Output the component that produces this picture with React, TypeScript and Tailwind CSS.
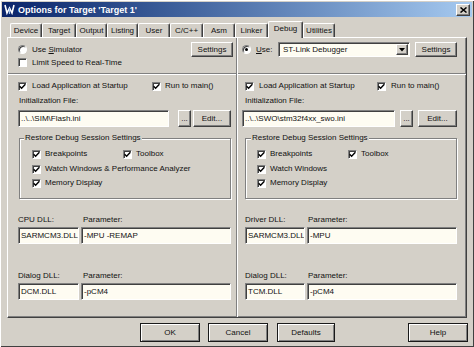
import React from "react";

// Windows-classic dialog: "Options for Target" / Debug tab

function Check({ checked = true }: { checked?: boolean }) {
  return (
    <span className="w-[9px] h-[9px] shrink-0 bg-white border border-t-[#808080] border-l-[#808080] border-r-white border-b-white shadow-[inset_1px_1px_0_#404040] flex items-center justify-center">
      {checked && (
        <svg width="7" height="7" viewBox="0 0 7 7" className="overflow-visible">
          <path d="M0.6 3.2 L2.6 5.2 L6.4 1.2" fill="none" stroke="#000" strokeWidth="1.4" />
        </svg>
      )}
    </span>
  );
}

function Radio({ on = false }: { on?: boolean }) {
  return (
    <span className="w-[9px] h-[9px] shrink-0 rounded-full bg-white border border-t-[#808080] border-l-[#808080] border-r-white border-b-white shadow-[inset_1px_1px_0_#404040] flex items-center justify-center">
      {on && <span className="w-[3px] h-[3px] rounded-full bg-black" />}
    </span>
  );
}

function Btn({ children, className = "" }: { children: React.ReactNode; className?: string }) {
  return (
    <div className={`shrink-0 flex items-center justify-center bg-[#d4d0c8] border border-t-white border-l-white border-r-[#404040] border-b-[#404040] shadow-[inset_-1px_-1px_0_#808080] ${className}`}>
      {children}
    </div>
  );
}

function DlgBtn({ children, className = "" }: { children: React.ReactNode; className?: string }) {
  return (
    <div className={`h-[19px] shrink-0 flex items-center justify-center bg-[#d4d0c8] border border-[#1a1a1a] shadow-[inset_1px_1px_0_#fff,inset_-1px_-1px_0_#808080] ${className}`}>
      {children}
    </div>
  );
}

function Field({ value, className = "" }: { value: string; className?: string }) {
  return (
    <div className={`h-[17px] shrink-0 flex items-center pl-[2px] bg-[#fefcf2] border border-t-[#808080] border-l-[#808080] border-r-white border-b-white shadow-[inset_1px_1px_0_#404040] whitespace-nowrap overflow-hidden ${className}`}>
      {value}
    </div>
  );
}

function Groove() {
  return <div className="h-[2px] border-t border-t-[#808080] border-b border-b-white" />;
}

function TitleIcon() {
  return (
    <svg width="11" height="11" viewBox="0 0 11 11">
      <path d="M1 1 L3 9 L5.5 4 L8 9 L10 1" fill="none" stroke="#fff" strokeWidth="1.6" />
      <path d="M5.5 4 L5.5 10" stroke="#9fc3f0" strokeWidth="1.2" />
    </svg>
  );
}

const tabs = [
  { label: "Device", cls: "w-[32px]" },
  { label: "Target", cls: "w-[34px]" },
  { label: "Output", cls: "w-[31px]" },
  { label: "Listing", cls: "w-[31px]" },
  { label: "User", cls: "w-[32px]" },
  { label: "C/C++", cls: "w-[33px]" },
  { label: "Asm", cls: "w-[32px]" },
  { label: "Linker", cls: "w-[33px]" },
  { label: "Debug", cls: "w-[35px]", active: true },
  { label: "Utilities", cls: "w-[32px]" },
];

function LeftPane() {
  return (
    <div className="w-[228px] flex flex-col">
      <div className="mt-[4px] h-[15px] flex items-center pl-[10px] pr-[3px]">
        <Radio />
        <span className="ml-[5px]">
          Use <span className="underline">S</span>imulator
        </span>
        <Btn className="ml-auto w-[42px] h-[15px]">Settings</Btn>
      </div>
      <div className="h-[11px] flex items-center gap-[5px] pl-[10px]">
        <Check checked={false} />
        <span>Limit Speed to Real-Time</span>
      </div>
      <div className="mt-[5px]">
        <Groove />
      </div>

      <div className="mt-[6px] h-[10px] flex items-center pl-[10px]">
        <div className="w-[134px] flex items-center gap-[5px]">
          <Check />
          <span>Load Application at Startup</span>
        </div>
        <div className="flex items-center gap-[4px]">
          <Check />
          <span>Run to main()</span>
        </div>
      </div>
      <div className="mt-[5px] h-[10px] pl-[11px]">Initialization File:</div>
      <div className="mt-[4px] flex pl-[10px]">
        <Field value={"..\\..\\SIM\\Flash.ini"} className="w-[151px]" />
        <Btn className="ml-[9px] w-[13px] h-[17px]">...</Btn>
        <Btn className="ml-[2px] w-[38px] h-[17px]">Edit...</Btn>
      </div>

      <div className="relative mt-[11px] ml-[11px] w-[212px] h-[61px] border border-[#808080] shadow-[inset_1px_1px_0_#fff,1px_1px_0_#fff] pt-[10px] pl-[12px] flex flex-col">
        <span className="absolute -top-[6px] left-[4px] px-[1px] bg-[#d4d0c8] leading-[10px]">Restore Debug Session Settings</span>
        <div className="h-[10px] flex items-center">
          <div className="w-[91px] flex items-center gap-[4px]">
            <Check />
            <span>Breakpoints</span>
          </div>
          <div className="flex items-center gap-[4px]">
            <Check />
            <span>Toolbox</span>
          </div>
        </div>
        <div className="mt-[5px] h-[10px] flex items-center gap-[4px]">
          <Check />
          <span>Watch Windows &amp; Performance Analyzer</span>
        </div>
        <div className="mt-[4px] h-[10px] flex items-center gap-[4px]">
          <Check />
          <span>Memory Display</span>
        </div>
      </div>

      <div className="mt-[16px] h-[10px] flex pl-[10px]">
        <span className="w-[63px]">CPU DLL:</span>
        <span className="pl-[2px]">Parameter:</span>
      </div>
      <div className="mt-[2px] flex pl-[10px]">
        <Field value="SARMCM3.DLL" className="w-[61px]" />
        <Field value="-MPU -REMAP" className="ml-[2px] w-[150px]" />
      </div>
      <div className="mt-[27px] h-[10px] flex pl-[10px]">
        <span className="w-[63px]">Dialog DLL:</span>
        <span className="pl-[2px]">Parameter:</span>
      </div>
      <div className="mt-[2px] flex pl-[10px]">
        <Field value="DCM.DLL" className="w-[61px]" />
        <Field value="-pCM4" className="ml-[2px] w-[150px]" />
      </div>
    </div>
  );
}

function RightPane() {
  return (
    <div className="w-[228px] flex flex-col">
      <div className="mt-[4px] h-[15px] flex items-center pl-[4px]">
        <div className="w-[36px] flex items-center">
          <Radio on />
          <span className="ml-[5px]">
            <span className="underline">U</span>se:
          </span>
        </div>
        <div className="w-[132px] h-[15px] flex items-center bg-[#fefcf2] border border-t-[#808080] border-l-[#808080] border-r-white border-b-white shadow-[inset_1px_1px_0_#404040] pl-[4px]">
          <span>ST-Link Debugger</span>
          <Btn className="ml-auto mr-[1px] w-[12px] h-[11px]">
            <svg width="6" height="4" viewBox="0 0 6 4">
              <path d="M0 0 H6 L3 3.5 Z" fill="#000" />
            </svg>
          </Btn>
        </div>
        <Btn className="ml-[5px] w-[42px] h-[15px]">Settings</Btn>
      </div>
      <div className="mt-[16px]">
        <Groove />
      </div>

      <div className="mt-[6px] h-[10px] flex items-center pl-[7px]">
        <div className="w-[132px] flex items-center gap-[5px]">
          <Check />
          <span>Load Application at Startup</span>
        </div>
        <div className="flex items-center gap-[5px]">
          <Check />
          <span>Run to main()</span>
        </div>
      </div>
      <div className="mt-[5px] h-[10px] pl-[7px]">Initialization File:</div>
      <div className="mt-[4px] flex pl-[4px]">
        <Field value={"..\\..\\SWO\\stm32f4xx_swo.ini"} className="w-[153px]" />
        <Btn className="ml-[5px] w-[13px] h-[17px]">...</Btn>
        <Btn className="ml-[5px] w-[39px] h-[17px]">Edit...</Btn>
      </div>

      <div className="relative mt-[11px] ml-[7px] w-[212px] h-[61px] border border-[#808080] shadow-[inset_1px_1px_0_#fff,1px_1px_0_#fff] pt-[10px] pl-[11px] flex flex-col">
        <span className="absolute -top-[6px] left-[5px] px-[1px] bg-[#d4d0c8] leading-[10px]">Restore Debug Session Settings</span>
        <div className="h-[10px] flex items-center">
          <div className="w-[91px] flex items-center gap-[4px]">
            <Check />
            <span>Breakpoints</span>
          </div>
          <div className="flex items-center gap-[4px]">
            <Check />
            <span>Toolbox</span>
          </div>
        </div>
        <div className="mt-[5px] h-[10px] flex items-center gap-[4px]">
          <Check />
          <span>Watch Windows</span>
        </div>
        <div className="mt-[4px] h-[10px] flex items-center gap-[4px]">
          <Check />
          <span>Memory Display</span>
        </div>
      </div>

      <div className="mt-[16px] h-[10px] flex pl-[7px]">
        <span className="w-[62px]">Driver DLL:</span>
        <span className="pl-[1px]">Parameter:</span>
      </div>
      <div className="mt-[2px] flex pl-[7px]">
        <Field value="SARMCM3.DLL" className="w-[60px]" />
        <Field value="-MPU" className="ml-[2px] w-[150px]" />
      </div>
      <div className="mt-[27px] h-[10px] flex pl-[7px]">
        <span className="w-[62px]">Dialog DLL:</span>
        <span className="pl-[1px]">Parameter:</span>
      </div>
      <div className="mt-[2px] flex pl-[7px]">
        <Field value="TCM.DLL" className="w-[60px]" />
        <Field value="-pCM4" className="ml-[2px] w-[150px]" />
      </div>
    </div>
  );
}

export default function App() {
  return (
    <div className="w-[474px] h-[347px] bg-[#d4d0c8] flex flex-col text-[8px] leading-[10px] text-[#111] font-['Liberation_Sans',Arial,sans-serif] overflow-hidden shadow-[inset_1px_1px_0_#fff,inset_-1px_-1px_0_#404040]">
      {/* title bar */}
      <div className="mt-[2px] mx-[2px] h-[15px] flex items-center bg-linear-to-r from-[#0a246a] to-[#a6caf0] pl-[2px] pr-[2px]">
        <TitleIcon />
        <span className="ml-[3px] text-[9px] font-bold text-white">Options for Target 'Target 1'</span>
        <Btn className="ml-auto w-[14px] h-[12px]">
          <svg width="7" height="6" viewBox="0 0 7 6">
            <path d="M0.5 0.5 L6.5 5.5 M6.5 0.5 L0.5 5.5" stroke="#000" strokeWidth="1.5" />
          </svg>
        </Btn>
      </div>

      {/* tabs */}
      <div className="h-[20px] flex items-end pl-[10px]">
        {tabs.map((t) =>
          t.active ? (
            <div
              key={t.label}
              className={`${t.cls} h-[17px] -mb-[1px] relative z-10 pb-[3px] flex items-center justify-center bg-[#d4d0c8] border-t border-l border-r border-t-white border-l-white border-r-[#404040] rounded-t-[2px] shadow-[inset_-1px_0_0_#808080]`}
            >
              {t.label}
            </div>
          ) : (
            <div
              key={t.label}
              className={`${t.cls} h-[14px] flex items-center justify-center border-t border-l border-r border-t-white border-l-white border-r-[#404040] rounded-t-[2px] shadow-[inset_-1px_0_0_#808080]`}
            >
              {t.label}
            </div>
          )
        )}
      </div>

      {/* tab page */}
      <div className="ml-[7px] w-[460px] h-[281px] flex border-t border-l border-t-white border-l-white border-r border-b border-r-[#404040] border-b-[#404040] shadow-[inset_-1px_-1px_0_#808080]">
        <LeftPane />
        <div className="w-[2px] border-l border-l-[#808080] border-r border-r-white" />
        <RightPane />
      </div>

      {/* dialog buttons */}
      <div className="mt-[5px] flex">
        <DlgBtn className="ml-[140px] w-[60px]">OK</DlgBtn>
        <DlgBtn className="ml-[8px] w-[60px]">Cancel</DlgBtn>
        <DlgBtn className="ml-[9px] w-[58px]">Defaults</DlgBtn>
        <DlgBtn className="ml-[73px] w-[60px]">Help</DlgBtn>
      </div>
    </div>
  );
}
